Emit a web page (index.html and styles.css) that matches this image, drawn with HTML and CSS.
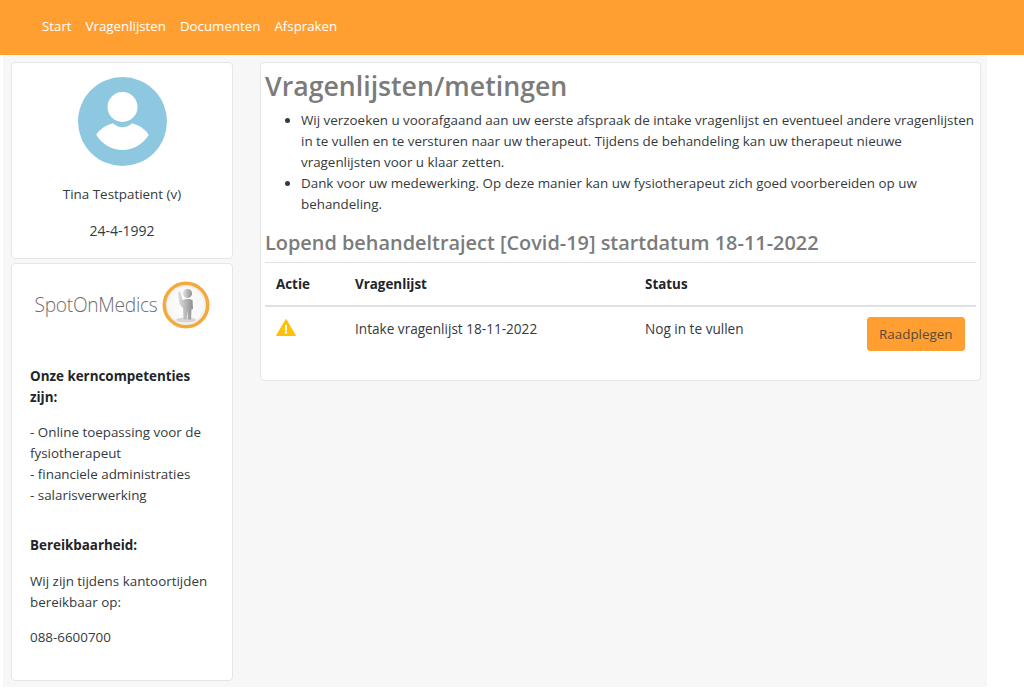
FILE: index.html
```html
<!DOCTYPE html>
<html lang="nl">
<head>
<meta charset="utf-8">
<title>Vragenlijsten</title>
<link rel="stylesheet" href="styles.css">
</head>
<body>
<nav class="topbar">
  <a href="#">Start</a>
  <a href="#">Vragenlijsten</a>
  <a href="#">Documenten</a>
  <a href="#">Afspraken</a>
</nav>
<div class="wrapper">
  <aside class="sidebar">
    <section class="card profile">
      <svg class="avatar" viewBox="0 0 89 89" width="89" height="89" aria-hidden="true">
        <circle cx="44.5" cy="44.5" r="44.5" fill="#8ec8e0"/>
        <circle cx="44.5" cy="30" r="15" fill="#fff"/>
        <path d="M18.300 58C21 53 27 48.500 35 46.300C38 49 41 50.300 44.500 50.300C48 50.300 51 49 54 46.300C62 48.500 68 53 70.700 58C65 67 55 73 44.500 73C34 73 24 67 18.300 58Z" fill="#fff"/>
      </svg>
      <p>Tina Testpatient (v)</p>
      <p class="dob">24-4-1992</p>
    </section>
    <section class="card info">
      <div class="logo">
        <span class="logo-text">SpotOnMedics</span>
        <svg class="logo-mark" viewBox="0 0 48 48" width="48" height="48" aria-hidden="true">
          <defs>
            <radialGradient id="disc" cx="50%" cy="50%" r="50%">
              <stop offset="0" stop-color="#fff"/>
              <stop offset="0.8" stop-color="#f8f8f8"/>
              <stop offset="1" stop-color="#e0e0e0"/>
            </radialGradient>
            <linearGradient id="fig" x1="0" y1="0" x2="1" y2="0">
              <stop offset="0" stop-color="#e2e2e2"/>
              <stop offset="1" stop-color="#8f8f8f"/>
            </linearGradient>
          </defs>
          <circle cx="24" cy="24" r="21.750" fill="url(#disc)" stroke="#f5a93a" stroke-width="3.500"/>
          <ellipse cx="24" cy="39" rx="10" ry="2.500" fill="#d6d6d6"/>
          <circle cx="25.500" cy="12.500" r="4.500" fill="url(#fig)"/>
          <path d="M20.500 19C23 17.500 28.500 17.500 30.500 19L31 28L29.500 28.500L29 38.500L26 38.500L25.300 30L24.500 38.500L21.500 38.500L21 27L17.500 23.500L16 13L16.500 10.500L18.500 11L19 13.500L20.500 19Z" fill="url(#fig)"/>
        </svg>
      </div>
      <p class="strong">Onze kerncompetenties zijn:</p>
      <p>- Online toepassing voor de fysiotherapeut<br>- financiele administraties<br>- salarisverwerking</p>
      <p class="strong gap">Bereikbaarheid:</p>
      <p class="reach">Wij zijn tijdens kantoortijden bereikbaar op:</p>
      <p>088-6600700</p>
    </section>
  </aside>
  <main class="card content">
    <h1>Vragenlijsten/metingen</h1>
    <ul>
      <li>Wij verzoeken u voorafgaand aan uw eerste afspraak de intake vragenlijst en eventueel andere vragenlijsten in te vullen en te versturen naar uw therapeut. Tijdens de behandeling kan uw therapeut nieuwe vragenlijsten voor u klaar zetten.</li>
      <li>Dank voor uw medewerking. Op deze manier kan uw fysiotherapeut zich goed voorbereiden op uw behandeling.</li>
    </ul>
    <h2>Lopend behandeltraject [Covid-19] startdatum 18-11-2022</h2>
    <table>
      <thead>
        <tr>
          <th class="col-action">Actie</th>
          <th class="col-list">Vragenlijst</th>
          <th class="col-status">Status</th>
          <th></th>
        </tr>
      </thead>
      <tbody>
        <tr>
          <td>
            <svg class="warn" viewBox="0 0 20 17" width="20" height="17" aria-hidden="true">
              <path d="M10 0.500L19.500 16.500H0.500Z" fill="#ffc107" stroke="#ffc107" stroke-linejoin="round"/>
              <rect x="9" y="6" width="2" height="5.500" fill="#fff"/>
              <circle cx="10" cy="13.500" r="1.200" fill="#fff"/>
            </svg>
          </td>
          <td>Intake vragenlijst 18-11-2022</td>
          <td>Nog in te vullen</td>
          <td class="col-btn"><a class="btn" href="#">Raadplegen</a></td>
        </tr>
      </tbody>
    </table>
  </main>
</div>
</body>
</html>
```
FILE: styles.css
```css
* { box-sizing: border-box; }
html, body { margin: 0; padding: 0; }
body {
  background: #fff;
  color: #343a40;
  font-family: "Open Sans", "Noto Sans", sans-serif;
  font-size: 13.4px;
  line-height: 21px;
}
a { text-decoration: none; }
p { margin: 0; }

.topbar {
  display: flex;
  align-items: center;
  gap: 14px;
  height: 55px;
  padding: 0 0 2px 42px;
  background: #ff9f32;
}
.topbar a { color: #fff; font-size: 13.3px; }

.wrapper {
  display: flex;
  align-items: flex-start;
  gap: 27px;
  width: 984px;
  height: 632px;
  margin-left: 3px;
  padding: 7px 6px 0 8px;
  background: #f7f7f7;
}
.card {
  background: #fff;
  border: 1px solid #e6e6e6;
  border-radius: 4px;
}
.sidebar {
  display: flex;
  flex-direction: column;
  gap: 4px;
  flex: 0 0 222px;
}
.profile {
  height: 197px;
  padding: 14px 18px 0;
  text-align: center;
}
.avatar { display: block; margin: 0 auto 18px; }
.dob { margin-top: 15px; font-size: 14px; }

.info { height: 418px; padding: 13px 18px 0; }
.logo {
  display: flex;
  align-items: center;
  justify-content: center;
  gap: 5px;
  margin: 4px 0 37px 1px;
}
.logo-text { color: #6d6d6d; font: 300 19.2px/48px "Open Sans", sans-serif; letter-spacing: -0.3px; }
.info p { margin-bottom: 14px; }
.strong { font-weight: 700; color: #212529; }
.info .gap { margin-top: 29px; margin-bottom: 15px; }

.content {
  flex: 1;
  height: 319px;
  padding: 5px 4px 0;
}
h1 {
  margin: 0 0 6px;
  color: #7b7b7b;
  font-size: 26.7px;
  font-weight: 600;
  line-height: 36px;
}
ul { margin: 0 0 14px; padding-left: 36px; }
h2 {
  margin: 0 0 5px;
  color: #7b7b7b;
  font-size: 19.9px;
  font-weight: 600;
  line-height: 28px;
}
table { width: 100%; border-collapse: collapse; }
th {
  padding: 11px 11px 10px;
  border-top: 1px solid #dee2e6;
  border-bottom: 2px solid #dee2e6;
  color: #212529;
  font-weight: 700;
  text-align: left;
}
td { padding: 11px; vertical-align: top; font-size: 13.6px; }
.col-action { width: 79px; }
.col-list { width: 290px; }
.col-status { width: 180px; }
.col-btn { text-align: right; }
.warn { display: block; margin-top: 1px; }
.btn {
  display: inline-block;
  padding: 6px 11.500px;
  margin-top: -1px;
  background: #ff9f32;
  border: 1px solid #ff9f32;
  border-radius: 3px;
  color: #5a4a38;
  font-size: 13.4px;
  line-height: 20px;
}
```
